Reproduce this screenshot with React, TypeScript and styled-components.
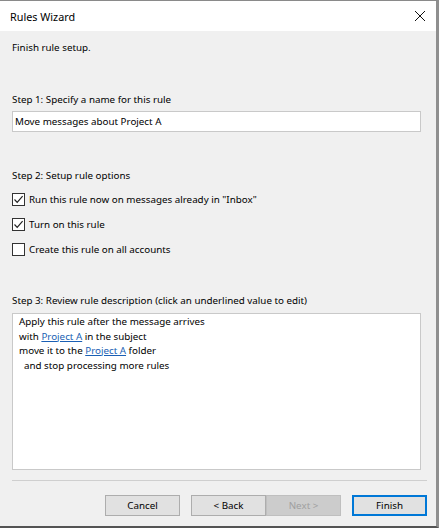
import React from "react";
import styled, { createGlobalStyle } from "styled-components";

const Global = createGlobalStyle`
  html, body { margin: 0; padding: 0; background: #f0f0f0; }
  body { font-family: "Noto Sans", "Segoe UI", sans-serif; font-size: 9.8px; color: #000; }
  * { box-sizing: border-box; }
`;

const Frame = styled.div`
  width: 439px;
  height: 528px;
  display: flex;
  flex-direction: column;
  background: #f0f0f0;
  border-top: 1px solid #8a8a8a;
  border-right: 3px solid #8f8f8f;
  border-bottom: 2px solid #545454;
  overflow: hidden;
`;

const TitleBar = styled.div`
  height: 30px;
  flex: none;
  background: #fff;
  display: flex;
  align-items: center;
  justify-content: space-between;
  padding: 0 10px 0 10px;
  font-size: 10.8px;
`;

const Close = styled.svg`
  width: 12px;
  height: 12px;
`;

const Body = styled.div`
  flex: 1;
  display: flex;
  flex-direction: column;
  padding: 9px 9px 0 12px;
`;

const Text = styled.div<{ $mt?: number }>`
  line-height: 16px;
  margin-top: ${(p) => p.$mt ?? 0}px;
  margin-right: 6px;
`;

const NameInput = styled.div`
  margin-top: 3px;
  margin-right: 6px;
  height: 21px;
  background: #fff;
  border: 1px solid #c9c9c9;
  padding: 0 2px;
  line-height: 19px;
`;

const Options = styled.div`
  margin-top: 5px;
  display: flex;
  flex-direction: column;
  gap: 5px;
`;

const Row = styled.label`
  height: 20px;
  display: flex;
  align-items: center;
  gap: 4px;
`;

const Box = styled.span`
  width: 13px;
  height: 13px;
  border: 1px solid #333;
  background: #fff;
  display: flex;
  align-items: center;
  justify-content: center;
  flex: none;
`;

const Desc = styled.div`
  margin-top: 4px;
  margin-right: 6px;
  height: 157px;
  background: #fff;
  border: 1px solid #c9c9c9;
  padding: 1px 6px;
  line-height: 14.5px;
`;

const Link = styled.span`
  color: #1a5fb4;
  text-decoration: underline;
`;

const Indent = styled.div`
  padding-left: 5px;
`;

const Sep = styled.div`
  margin-top: 10px;
  height: 1px;
  background: #cfcfcf;
`;

const Buttons = styled.div`
  margin-top: 14px;
  display: flex;
  justify-content: flex-end;
`;

const Btn = styled.button<{ $variant?: "default" | "disabled" | "primary"; $ml?: number }>`
  width: 75px;
  height: 21px;
  margin-left: ${(p) => p.$ml ?? 0}px;
  font-family: inherit;
  font-size: 9.8px;
  padding: 0;
  background: ${(p) => (p.$variant === "disabled" ? "#cccccc" : "#e1e1e1")};
  color: ${(p) => (p.$variant === "disabled" ? "#a0a0a0" : "#000")};
  border: ${(p) => (p.$variant === "primary" ? "2px solid #0078d7" : "1px solid #adadad")};
  border-color: ${(p) => (p.$variant === "disabled" ? "#bfbfbf" : undefined)};
`;

const Check = () => (
  <svg width="11" height="11" viewBox="0 0 11 11">
    <path d="M1.5 5.5 L4.2 8.3 L9.6 2.2" fill="none" stroke="#222" strokeWidth="1.2" />
  </svg>
);

export default function App() {
  return (
    <>
      <Global />
      <Frame>
        <TitleBar>
          <span>Rules Wizard</span>
          <Close viewBox="0 0 12 12">
            <path d="M1 1 L11 11 M11 1 L1 11" stroke="#111" strokeWidth="1" />
          </Close>
        </TitleBar>
        <Body>
          <Text>Finish rule setup.</Text>
          <Text $mt={36}>Step 1: Specify a name for this rule</Text>
          <NameInput>Move messages about Project A</NameInput>
          <Text $mt={36}>Step 2: Setup rule options</Text>
          <Options>
            <Row>
              <Box><Check /></Box>
              Run this rule now on messages already in "Inbox"
            </Row>
            <Row>
              <Box><Check /></Box>
              Turn on this rule
            </Row>
            <Row>
              <Box />
              Create this rule on all accounts
            </Row>
          </Options>
          <Text $mt={34}>Step 3: Review rule description (click an underlined value to edit)</Text>
          <Desc>
            <div>Apply this rule after the message arrives</div>
            <div>
              with <Link>Project A</Link> in the subject
            </div>
            <div>
              move it to the <Link>Project A</Link> folder
            </div>
            <Indent>and stop processing more rules</Indent>
          </Desc>
          <Sep />
          <Buttons>
            <Btn>Cancel</Btn>
            <Btn $ml={11}>&lt; Back</Btn>
            <Btn $variant="disabled">Next &gt;</Btn>
            <Btn $variant="primary" $ml={11}>Finish</Btn>
          </Buttons>
        </Body>
      </Frame>
    </>
  );
}
